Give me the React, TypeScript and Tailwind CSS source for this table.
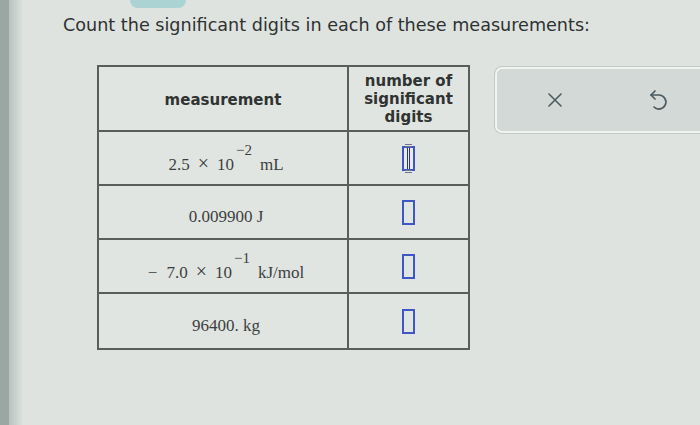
import React from "react";

type Row = { lead: string; mant: string; exp: string; unit: string; cursor: boolean };

const rows: Row[] = [
  { lead: "", mant: "2.5", exp: "−2", unit: "mL", cursor: true },
  { lead: "", mant: "0.009900 J", exp: "", unit: "", cursor: false },
  { lead: "−", mant: "7.0", exp: "−1", unit: "kJ/mol", cursor: false },
  { lead: "", mant: "96400. kg", exp: "", unit: "", cursor: false },
];

const AnswerBox: React.FC<{ cursor: boolean }> = ({ cursor }) =>
  cursor ? (
    <div className="relative w-[13px] h-[25px] border-2 border-[#3f57c6] bg-[#e4e9f2] flex justify-center">
      <div className="w-[3px] h-full border-x border-[#34394e]" />
      <div className="absolute -top-[4px] w-[7px] h-[3px] border-y border-[#6f7490]" />
      <div className="absolute -bottom-[4px] w-[7px] h-[3px] border-y border-[#6f7490]" />
    </div>
  ) : (
    <div className="w-[13px] h-[25px] border-2 border-[#3f57c6]" />
  );

const Measurement: React.FC<{ r: Row }> = ({ r }) => (
  <div className="flex items-baseline whitespace-pre">
    {r.lead && <span className="mr-[9px]">{r.lead}</span>}
    <span>{r.mant}</span>
    {r.exp && (
      <>
        <span className="mx-[8px] text-[20px]">×</span>
        <span>10</span>
        <span className="relative -top-[15px] ml-[2px] text-[15px]">{r.exp}</span>
        <span className="ml-[8px]">{r.unit}</span>
      </>
    )}
  </div>
);

export default function App() {
  return (
    <div className="w-[700px] h-[425px] flex bg-[#dfe3e0] overflow-hidden font-['DejaVu_Sans',sans-serif]">
      <div className="w-[22px] h-full flex">
        <div className="w-[9px] bg-[#9aa7a3]" />
        <div className="w-[13px] bg-gradient-to-r from-[#b9c3c0] to-[#d9dfdc]" />
      </div>
      <div className="flex-1 flex flex-col">
        <div className="ml-[108px] w-[56px] h-[8px] rounded-b-[10px] bg-[#acd3d3]" />
        <div className="pl-[41px] pt-[5px] text-[17.6px] leading-[24px] text-[#2e3230]">
          Count the significant digits in each of these measurements:
        </div>
        <div className="flex items-start pt-[28px] pl-[75px]">
          <div className="w-[373px] border-2 border-[#595d5b] bg-[#e1e5e2]">
            <div className="flex h-[65px] border-b-2 border-[#595d5b]">
              <div className="w-[250px] border-r-2 border-[#595d5b] flex items-center justify-center pt-[3px] font-bold text-[15px] text-[#2f3331]">
                measurement
              </div>
              <div className="flex-1 flex items-center justify-center text-center font-bold text-[15px] leading-[18px] text-[#2f3331]">
                number of
                <br />
                significant
                <br />
                digits
              </div>
            </div>
            {rows.map((r, i) => (
              <div key={i} className={"flex h-[54px] " + (i < rows.length - 1 ? "border-b-2 border-[#595d5b]" : "")}>
                <div className="w-[250px] border-r-2 border-[#595d5b] flex items-center justify-center pl-[6px] pt-[10px] font-['Liberation_Serif',serif] text-[17px] text-[#3c3f3e]">
                  <Measurement r={r} />
                </div>
                <div className="flex-1 flex items-center justify-center">
                  <AnswerBox cursor={r.cursor} />
                </div>
              </div>
            ))}
          </div>
          <div className="ml-[25px] mt-[2px] flex-1 h-[66px] rounded-l-[7px] border-2 border-r-0 border-[#f1f3f1] bg-[#d3d9d6] shadow-[0_0_0_1px_#c2c9c6] flex items-center pl-[50px] gap-[86px]">
            <svg width="16" height="16" viewBox="0 0 16 16" fill="none" stroke="#4b5b60" strokeWidth="1.6" strokeLinecap="round">
              <path d="M2 2 L14 14 M14 2 L2 14" />
            </svg>
            <svg width="20" height="22" viewBox="0 0 20 22" fill="none" stroke="#4b5b60" strokeWidth="1.7" strokeLinecap="round" strokeLinejoin="round">
              <path d="M6 2 L2 6 L6 10" />
              <path d="M2 6 H10 A7 7 0 1 1 5 18" />
            </svg>
          </div>
        </div>
      </div>
    </div>
  );
}
